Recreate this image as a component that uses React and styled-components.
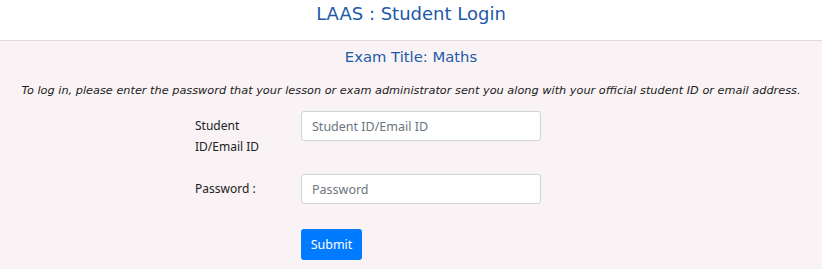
import React from "react";
import styled, { createGlobalStyle } from "styled-components";

const GlobalStyle = createGlobalStyle`
  html, body {
    margin: 0;
    padding: 0;
    background: #f9f3f5;
  }
  * { box-sizing: border-box; }
`;

const App = () => {
  return (
    <>
      <GlobalStyle />
      <Page>
        <Header>
          <Title>LAAS : Student Login</Title>
        </Header>
        <Main>
          <ExamTitle>Exam Title: Maths</ExamTitle>
          <Instructions>
            To log in, please enter the password that your lesson or exam
            administrator sent you along with your official student ID or email
            address.
          </Instructions>
          <Form onSubmit={(e) => e.preventDefault()}>
            <FormRow>
              <Label htmlFor="studentId">
                Student
                <br />
                ID/Email ID
              </Label>
              <Input id="studentId" placeholder="Student ID/Email ID" />
            </FormRow>
            <FormRow>
              <Label htmlFor="password">Password :</Label>
              <Input id="password" type="password" placeholder="Password" />
            </FormRow>
            <FormRow>
              <span />
              <SubmitButton type="submit">Submit</SubmitButton>
            </FormRow>
          </Form>
        </Main>
      </Page>
    </>
  );
};

const Page = styled.div`
  width: 100%;
  min-height: 269px;
  background: #f9f3f5;
`;

const Header = styled.header`
  height: 41px;
  background: #ffffff;
  border-bottom: 1px solid #dcdcdc;
  display: flex;
  justify-content: center;
  padding-top: 3px;
`;

const Title = styled.h1`
  margin: 0;
  font-family: "DejaVu Sans", Verdana, sans-serif;
  font-weight: normal;
  font-size: 18px;
  line-height: 22px;
  color: #1e5aa8;
`;

const Main = styled.main`
  display: flex;
  flex-direction: column;
  padding-top: 7px;
`;

const ExamTitle = styled.h2`
  margin: 0;
  text-align: center;
  font-family: "DejaVu Sans", Verdana, sans-serif;
  font-weight: normal;
  font-size: 14.8px;
  line-height: 18px;
  color: #1e5aa8;
`;

const Instructions = styled.p`
  margin: 18px 0 0;
  text-align: center;
  font-family: "DejaVu Sans", Verdana, sans-serif;
  font-style: italic;
  font-size: 11.3px;
  line-height: 14px;
  color: #222;
  white-space: nowrap;
`;

const Form = styled.form`
  display: flex;
  flex-direction: column;
  gap: 17px;
  margin-top: 13px;
  padding-left: 195px;
`;

const FormRow = styled.div`
  display: grid;
  grid-template-columns: 106px 240px;
  align-items: start;
`;

const Label = styled.label`
  font-family: "Noto Sans", "Open Sans", sans-serif;
  font-size: 12px;
  line-height: 21px;
  color: #222;
  padding-top: 4px;
`;

const Input = styled.input`
  width: 240px;
  height: 30px;
  padding: 0 10px;
  border: 1px solid #ced4da;
  border-radius: 3px;
  background: #fff;
  font-family: "Noto Sans", "Open Sans", sans-serif;
  font-size: 12.5px;
  color: #495057;
  outline: none;

  &::placeholder {
    color: #6c757d;
  }
`;

const SubmitButton = styled.button`
  justify-self: start;
  width: 61px;
  height: 31px;
  margin-top: 8px;
  border: none;
  border-radius: 3px;
  background: #007bff;
  color: #fff;
  font-family: "Noto Sans", "Open Sans", sans-serif;
  font-size: 12.5px;
  cursor: pointer;
`;

export default App;
